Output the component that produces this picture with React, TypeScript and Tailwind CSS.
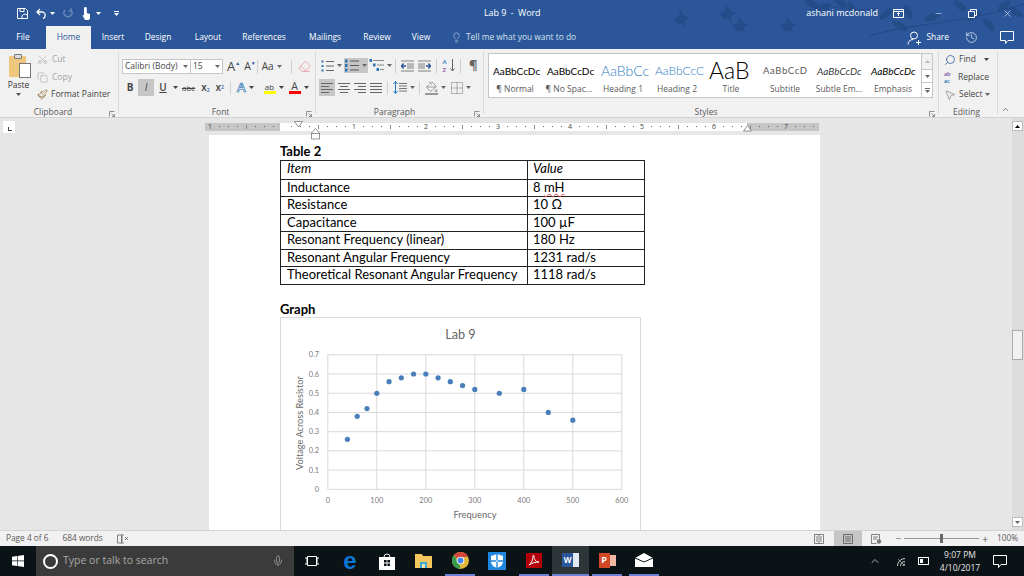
import {
  ChevronUp,
  Copy,
  Eraser,
  History,
  Lightbulb,
  Mic,
  Minus,
  MousePointer2,
  Paintbrush,
  PaintBucket,
  Scissors,
  Search,
  X,
} from 'lucide-react';

const ui = "font-['Open_Sans','Noto_Sans',sans-serif]";

const tabs: [string, string][] = [
  ['File', 'w-[46px]'],
  ['Home', 'w-[45px]'],
  ['Insert', 'w-[44px]'],
  ['Design', 'w-[46px]'],
  ['Layout', 'w-[54px]'],
  ['References', 'w-[58px]'],
  ['Mailings', 'w-[64px]'],
  ['Review', 'w-[40px]'],
  ['View', 'w-[48px]'],
];

const styleItems: { sample: string; label: string; cls: string }[] = [
  { sample: 'AaBbCcDc', label: '¶ Normal', cls: 'text-[10px] text-black' },
  { sample: 'AaBbCcDc', label: '¶ No Spac...', cls: 'text-[10px] text-black' },
  { sample: 'AaBbCc', label: 'Heading 1', cls: 'text-[14px] font-light text-[#2e7cc4]' },
  { sample: 'AaBbCcC', label: 'Heading 2', cls: 'text-[12px] font-light text-[#2e7cc4]' },
  { sample: 'AaB', label: 'Title', cls: 'text-[23px] font-light text-black' },
  { sample: 'AaBbCcD', label: 'Subtitle', cls: 'text-[9.5px] tracking-[0.6px] text-[#5a5a5a]' },
  { sample: 'AaBbCcDc', label: 'Subtle Em...', cls: 'text-[10px] italic text-[#404040]' },
  { sample: 'AaBbCcDc', label: 'Emphasis', cls: 'text-[10px] italic text-black' },
];

const rows = [
  ['Inductance', '8 mH'],
  ['Resistance', '10 Ω'],
  ['Capacitance', '100 µF'],
  ['Resonant Frequency (linear)', '180 Hz'],
  ['Resonant Angular Frequency', '1231 rad/s'],
  ['Theoretical Resonant Angular Frequency', '1118 rad/s'],
];

const points = [
  [40, 0.26], [60, 0.38], [80, 0.42], [100, 0.5], [125, 0.56], [150, 0.58], [175, 0.6], [200, 0.6],
  [225, 0.58], [250, 0.56], [275, 0.54], [300, 0.52], [350, 0.5], [400, 0.52], [450, 0.4], [500, 0.36],
];

const Caret = ({ className = 'text-[#666]' }: { className?: string }) => (
  <svg width="5" height="3" viewBox="0 0 5 3" className={`shrink-0 ${className}`}>
    <path d="M0 0h5L2.5 3z" fill="currentColor" />
  </svg>
);

const GroupLabel = ({ label, shift = '', launcher = true }: { label: string; shift?: string; launcher?: boolean }) => (
  <div className="relative flex h-[10px] items-center justify-center pt-[6px] text-[8.5px] text-[#595959]">
    <span className={shift}>{label}</span>
    {launcher && (
      <svg width="6" height="6" viewBox="0 0 6 6" className="absolute right-[3px] bottom-[-3px]">
        <path d="M0.5 5.5V0.5H5.5M5.5 5.5L2.5 2.5M3 5.5h2.5V3" fill="none" stroke="#777" strokeWidth="0.8" />
      </svg>
    )}
  </div>
);

const Cell = ({ children, w, h = 'h-[17px]', active }: { children: React.ReactNode; w: string; h?: string; active?: boolean }) => (
  <div className={`flex items-center justify-center gap-[3px] ${w} ${h} ${active ? 'bg-[#c6c6c6]' : ''}`}>{children}</div>
);

const Sep = ({ className = 'mx-[2px]' }: { className?: string }) => <div className={`h-[14px] w-px shrink-0 bg-[#cfcfcf] ${className}`} />;

const Lines = ({ d }: { d: string }) => (
  <svg width="12" height="12" viewBox="0 0 12 12">
    <path d={d} fill="none" stroke="#666" />
  </svg>
);

const BulletIcon = () => (
  <svg width="13" height="12" viewBox="0 0 13 12">
    <path d="M5 1.5h8M5 6h8M5 10.5h8" stroke="#666" />
    <path d="M0.5 0.5h2v2h-2zM0.5 5h2v2h-2zM0.5 9.5h2v2h-2z" fill="#2e74b5" />
  </svg>
);

const NumberIcon = () => (
  <svg width="15" height="13" viewBox="0 0 15 13">
    <path d="M6 2h9M6 6.5h9M6 11h9" stroke="#555" />
    <path d="M1 0.5h2.5v3H1zM1 5h2.5v3H1zM1 9.5h2.5v3H1z" fill="#2e74b5" />
  </svg>
);

const MultiIcon = () => (
  <svg width="15" height="13" viewBox="0 0 15 13">
    <path d="M4 1.5h11M8 6h7M11 10.5h4" stroke="#888" />
    <path d="M0.5 0h2.5v3H0.5zM4 4.5h2.5v3H4zM7.5 9h2.5v3H7.5z" fill="#2e74b5" />
  </svg>
);

const IndentIcon = ({ flip }: { flip?: boolean }) => (
  <svg width="13" height="12" viewBox="0 0 13 12" className={flip ? '-scale-x-100' : ''}>
    <path d="M0 1h13M0 11h13M6 4h7M6 6h7M6 8h7" stroke="#666" strokeWidth="0.8" />
    <path d="M5 6H0.5M2.5 3.5L0.5 6l2 2.5" fill="none" stroke="#2b579a" strokeWidth="1.4" />
  </svg>
);

const Ruler = () => {
  const cells = Array.from({ length: 68 }, (_, k) => k - 8);
  return (
    <div className="flex h-[17px] shrink-0 items-center">
      <div className="ml-[3px] flex h-[12px] w-[12px] items-end justify-center bg-white pb-[2px] pl-[1px]">
        <div className="h-[4px] w-[4px] border-b border-l border-[#444]" />
      </div>
      <div className="relative ml-[190px] flex h-[8px] w-[614px] bg-[linear-gradient(90deg,#c6c6c6_75px,#fff_75px,#fff_542px,#c6c6c6_542px)] text-[7px] leading-[8px] text-[#444]">
        <div className="w-[0.5px]" />
        {cells.map((k) => (
          <div key={k} className="flex w-[9px] shrink-0 items-center justify-center">
            {k % 8 === 0 && k !== 0 ? (
              Math.abs(k / 8)
            ) : k % 4 === 0 && k !== 0 ? (
              <div className="h-[4px] w-px bg-[#888]" />
            ) : k !== 0 ? (
              <div className="h-px w-px bg-[#666]" />
            ) : null}
          </div>
        ))}
        <svg width="9" height="8" viewBox="0 0 9 8" className="absolute top-[-2px] left-[89px]">
          <path d="M0.5 0.5h8L4.5 6z" fill="#fff" stroke="#777" strokeWidth="0.8" />
        </svg>
        <svg width="9" height="12" viewBox="0 0 9 12" className="absolute top-[5px] left-[106px]">
          <path d="M4.5 0.5L8.5 5v6h-8V5z" fill="#fff" stroke="#777" strokeWidth="0.8" />
          <path d="M0.5 5.5h8" stroke="#777" strokeWidth="0.8" />
        </svg>
        <svg width="9" height="7" viewBox="0 0 9 7" className="absolute top-[2px] left-[538px]">
          <path d="M4.5 0.5L8.5 6h-8z" fill="#fff" stroke="#777" strokeWidth="0.8" />
        </svg>
      </div>
    </div>
  );
};

const Chart = () => {
  const px = (v: number) => 47.8 + (v / 600) * 294;
  const py = (v: number) => 172.3 - (v / 0.7) * 134.5;
  return (
    <svg width="361" height="230" viewBox="0 0 361 230" className="block font-['Lato',sans-serif]">
      <rect x="0.5" y="0.5" width="360" height="240" fill="#fff" stroke="#d9d9d9" />
      <text x="180.5" y="22" textAnchor="middle" fontSize="12.6" fill="#666">Lab 9</text>
      {[0, 0.1, 0.2, 0.3, 0.4, 0.5, 0.6, 0.7].map((v) => (
        <g key={v}>
          <line x1="47.8" x2="341.8" y1={py(v)} y2={py(v)} stroke="#d9d9d9" />
          <text x="39" y={py(v) + 2.5} textAnchor="end" fontSize="7.4" fill="#7a7a7a">{v}</text>
        </g>
      ))}
      {[0, 100, 200, 300, 400, 500, 600].map((v) => (
        <g key={v}>
          <line y1="37.8" y2="172.3" x1={px(v)} x2={px(v)} stroke="#d9d9d9" />
          <text x={px(v)} y="186" textAnchor="middle" fontSize="7.4" fill="#7a7a7a">{v}</text>
        </g>
      ))}
      <text transform="translate(23 106) rotate(-90)" textAnchor="middle" fontSize="9.2" fill="#6a6a6a">Voltage Across Resistor</text>
      <text x="195" y="201" textAnchor="middle" fontSize="9.4" fill="#6a6a6a">Frequency</text>
      {points.map(([x, y]) => (
        <circle key={x} cx={px(x)} cy={py(y)} r="2.6" fill="#4a7ebb" />
      ))}
    </svg>
  );
};

const birds: [number, number][] = [[10, 10], [56, 5], [69, 17], [117, 17]];
const leaves: [number, number, number][] = [
  [148, 4, 30], [160, 8, -30], [176, 2, 40], [188, 9, 60], [222, 14, -40], [236, 26, 30], [244, 12, 60],
  [268, 17, -20], [296, 6, 40], [310, 16, -30], [325, 25, 50], [340, 6, -40], [352, 12, 30],
];

const TitleArt = () => (
  <svg width="360" height="49" viewBox="0 0 360 49" className="pointer-events-none absolute top-0 right-0 text-[#244c88]">
    <g fill="currentColor">
      {birds.map(([x, y]) => (
        <path key={x} transform={`translate(${x} ${y}) scale(1.2)`} d="M0 7l4-2 1-5 3 4 5 3-4 2 1 6-3-4-4 1z" />
      ))}
      {leaves.map(([x, y, r]) => (
        <ellipse key={x} cx={x} cy={y} rx="8" ry="3.4" transform={`rotate(${r} ${x} ${y})`} />
      ))}
    </g>
    <path d="M205 36C240 24 300 24 360 4M140 0C170 8 190 12 215 8" fill="none" stroke="currentColor" strokeWidth="1.2" />
  </svg>
);

const Bubble = ({ w = 14 }: { w?: number }) => (
  <svg width={w} height="13" viewBox="0 0 14 13">
    <path d="M0.5 0.5h13v9H8l-2.5 3v-3h-5z" fill="none" stroke="#fff" />
  </svg>
);

const WinLogo = () => (
  <svg width="12" height="12" viewBox="0 0 12 12">
    <path d="M0 1.7L5 1v4.6H0zM5.6 0.9L12 0v5.6H5.6zM0 6.2h5v4.7l-5-.7zM5.6 6.2H12V12l-6.4-.9z" fill="#fff" />
  </svg>
);

const Running = ({ children, w, active }: { children: React.ReactNode; w: string; active?: boolean }) => (
  <div className={`flex h-[30px] flex-col items-center ${w}`}>
    <div className={`flex h-[28px] w-full items-center justify-center ${active ? 'bg-[#2e3539]' : ''}`}>{children}</div>
    <div className={`h-[2px] bg-[#6f80d8] ${active ? 'w-full' : 'w-[30px]'}`} />
  </div>
);

const Slot = ({ children, w }: { children: React.ReactNode; w: string }) => (
  <div className={`flex h-[30px] items-center justify-center ${w}`}>{children}</div>
);

export default function App() {
  return (
    <div className={`flex h-[576px] w-[1024px] flex-col overflow-hidden bg-[#e6e6e6] ${ui}`}>
      {/* title bar */}
      <header className="relative h-[49px] shrink-0 bg-[#2b579a] text-white">
        <TitleArt />
        <div className="relative flex h-[26px] items-center">
          <div className="flex w-[130px] items-center pl-[16px]">
            <svg width="13" height="13" viewBox="0 0 13 13" className="mr-[7px]">
              <path d="M1.5 1.5h8l2 2v8h-10z" fill="none" stroke="#fff" />
              <path d="M4 1.5v3h4v-3M6 11a3 3 0 0 1 5-3" fill="none" stroke="#fff" />
            </svg>
            <svg width="12" height="11" viewBox="0 0 12 11" className="mr-[2px]">
              <path d="M4 1L1 4l3 3M1 4h6a3.5 3.5 0 0 1 0 6.5" fill="none" stroke="#fff" strokeWidth="1.3" />
            </svg>
            <Caret className="mr-[8px] text-white" />
            <svg width="10" height="11" viewBox="0 0 10 11" className="mr-[9px]">
              <path d="M2 2a4 4 0 1 0 6 0M8 0v3H5" fill="none" stroke="#6e8ebd" strokeWidth="1.2" />
            </svg>
            <svg width="9" height="13" viewBox="0 0 9 13" className="mr-[5px]">
              <path d="M2 1.5a1.4 1.4 0 0 1 2.8 0V6L8 7v4l-1 2H3L0.5 8.5 2 8z" fill="#fff" />
            </svg>
            <Caret className="mr-[13px] text-white" />
            <div className="flex flex-col items-center gap-[1px]">
              <div className="h-px w-[5px] bg-white" />
              <Caret className="text-white" />
            </div>
          </div>
          <div className="ml-[354px] text-[9px] tracking-[-0.1px] whitespace-pre">Lab 9  -  Word</div>
          <div className="ml-auto flex items-center">
            <span className="mr-[15px] text-[9px]">ashani mcdonald</span>
            <svg width="11" height="9" viewBox="0 0 11 9" className="mr-[30px]">
              <path d="M0.5 0.5h10v8h-10zM0.5 2.5h10M5.5 7V4M4 5l1.5-1.5L7 5" fill="none" stroke="#fff" />
            </svg>
            <Minus size={9} strokeWidth={1.4} className="mr-[25px]" />
            <svg width="9" height="9" viewBox="0 0 9 9" className="mr-[25px]">
              <path d="M0.5 2.5h6v6h-6zM2.5 2.5v-2h6v6h-2" fill="none" stroke="#fff" />
            </svg>
            <X size={11} strokeWidth={1.2} className="mr-[11px]" />
          </div>
        </div>
        <div className="relative flex h-[23px] items-center text-[8.4px]">
          {tabs.map(([t, w]) => (
            <div
              key={t}
              className={`flex h-[23px] items-center justify-center ${w} ${
                t === 'Home' ? 'bg-[#f1f1f1] text-[#2b579a]' : 'text-white'
              }`}
            >
              {t}
            </div>
          ))}
          <div className="ml-[6px] flex items-center gap-[4px] text-[#d5e0ef]">
            <Lightbulb size={11} strokeWidth={1.2} />
            <span>Tell me what you want to do</span>
          </div>
          <div className="ml-auto flex items-center">
            <svg width="14" height="14" viewBox="0 0 14 14" className="mr-[5px]">
              <circle cx="7" cy="4.5" r="3.5" fill="none" stroke="#fff" />
              <path d="M1 13.5c0-3 2.2-5 5-5M9 11.5h5M11.5 9v5" fill="none" stroke="#fff" />
            </svg>
            <span className="mr-[16px]">Share</span>
            <History size={13} strokeWidth={1.2} className="mr-[22px]" />
            <Bubble />
            <div className="w-[10px]" />
          </div>
        </div>
      </header>

      {/* ribbon */}
      <section className="flex h-[69px] shrink-0 border-b border-[#d4d4d4] bg-[#f1f1f1] pt-[3px] pb-[3px] text-[8.5px] text-[#444]">
        {/* clipboard */}
        <div className="flex w-[119px] shrink-0 flex-col border-r border-[#d9d9d9]">
          <div className="flex h-[52px]">
            <div className="flex w-[37px] flex-col items-center pt-[2px]">
              <div className="relative ml-[3px] h-[25px] w-[22px]">
                <div className="absolute top-[2px] left-0 h-[21px] w-[17px] rounded-[1px] bg-[#eec77d]" />
                <div className="absolute top-0 left-[5px] h-[5px] w-[8px] rounded-[1px] border border-[#777] bg-[#ddd]" />
                <div className="absolute top-[9px] left-[10px] h-[15px] w-[12px] border border-[#777] bg-white" />
              </div>
              <span className="leading-[11px] text-[#333]">Paste</span>
              <Caret className="mt-[3px] text-[#555]" />
            </div>
            <div className="-mt-[1px] flex flex-col">
              <div className="flex h-[17.5px] items-center gap-[4px] text-[#a3a3a3]">
                <Scissors size={11} strokeWidth={1.2} className="-rotate-90" /> Cut
              </div>
              <div className="flex h-[17.5px] items-center gap-[4px] text-[#a3a3a3]">
                <Copy size={11} strokeWidth={1.2} /> Copy
              </div>
              <div className="flex h-[17.5px] items-center gap-[3px] whitespace-nowrap">
                <Paintbrush size={11} strokeWidth={1.6} className="text-[#8b6c2d]" /> Format Painter
              </div>
            </div>
          </div>
          <GroupLabel label="Clipboard" shift="mr-[12px]" />
        </div>

        {/* font */}
        <div className="flex w-[197px] shrink-0 flex-col border-r border-[#d9d9d9] pl-[3px]">
          <div className="flex h-[52px] flex-col">
            <div className="mt-[6px] flex h-[17px] items-center">
              <div className="flex h-[15px] w-[69px] items-center justify-between border border-[#c6c6c6] bg-white px-[2px]">
                <span className="whitespace-nowrap">Calibri (Body)</span>
                <Caret />
              </div>
              <div className="flex h-[15px] w-[32px] items-center justify-between border border-l-0 border-[#c6c6c6] bg-white px-[2px]">
                <span>15</span>
                <Caret />
              </div>
              <span className="ml-[4px] text-[13px] leading-none">A</span>
              <span className="mb-[6px] text-[5px] leading-none text-[#2b579a]">▲</span>
              <span className="ml-[4px] text-[10.5px] leading-none">A</span>
              <span className="mb-[6px] text-[5px] leading-none text-[#2b579a]">▼</span>
              <Sep className="ml-[1px] mr-[4px]" />
              <span className="text-[10px]">Aa</span>
              <Caret className="ml-[3px] text-[#666]" />
              <Sep className="ml-[9px] mr-[6px]" />
              <Eraser size={13} strokeWidth={1.3} className="text-[#e58a96]" />
            </div>
            <div className="mt-[4px] flex h-[17px] items-center text-[10px] text-[#444]">
              <div className="flex h-[17px] w-[16px] items-center justify-center font-bold">B</div>
              <div className="flex h-[17px] w-[16px] items-center justify-center bg-[#c6c6c6] italic">I</div>
              <div className="ml-[1px] flex h-[17px] w-[16px] items-center justify-center font-semibold underline">U</div>
              <Caret className="ml-[2px]" />
              <div className="ml-[4px] text-[8px] line-through">abc</div>
              <div className="ml-[6px] font-semibold">x<sub className="text-[5px] text-[#2b579a]">2</sub></div>
              <div className="ml-[6px] font-semibold">x<sup className="text-[5px] text-[#2b579a]">2</sup></div>
              <Sep className="mx-[6px]" />
              <span className="text-[13px] leading-none font-semibold text-white [-webkit-text-stroke:0.7px_#2e74b5]">A</span>
              <Caret className="mr-[10px] ml-[3px]" />
              <div className="flex flex-col items-center">
                <span className="text-[8px] leading-[9px]">ab</span>
                <div className="h-[3px] w-[12px] bg-[#ffff00]" />
              </div>
              <Caret className="mr-[5px] ml-[3px]" />
              <div className="flex flex-col items-center">
                <span className="text-[10.5px] leading-[10px]">A</span>
                <div className="h-[3px] w-[12px] bg-[#ff0000]" />
              </div>
              <Caret className="ml-[3px]" />
            </div>
          </div>
          <GroupLabel label="Font" shift="ml-[4px]" />
        </div>

        {/* paragraph */}
        <div className="flex w-[168px] shrink-0 flex-col border-r border-[#d9d9d9] pl-[3px]">
          <div className="flex h-[52px] flex-col">
            <div className="mt-[5px] flex h-[17px] items-center">
              <Cell w="w-[25px]">
                <BulletIcon />
                <Caret />
              </Cell>
              <Cell w="w-[25px]" h="h-[15px]" active>
                <NumberIcon />
                <Caret />
              </Cell>
              <Cell w="w-[26px]">
                <MultiIcon />
                <Caret />
              </Cell>
              <Sep />
              <Cell w="w-[18px]">
                <IndentIcon />
              </Cell>
              <Cell w="w-[18px]">
                <IndentIcon flip />
              </Cell>
              <Sep />
              <Cell w="w-[20px]">
                <div className="flex flex-col font-['Lato',sans-serif] text-[6px] leading-[7.5px] font-bold">
                  <span className="text-[#2b79c2]">A</span>
                  <span className="text-[#8a5fb0]">Z</span>
                </div>
                <svg width="5" height="13" viewBox="0 0 5 13">
                  <path d="M2.5 0v12M0.5 9.5l2 2.5 2-2.5" fill="none" stroke="#666" />
                </svg>
              </Cell>
              <Sep />
              <Cell w="w-[20px]">
                <span className="text-[13px] leading-none font-bold text-[#666]">¶</span>
              </Cell>
            </div>
            <div className="mt-[5px] flex h-[17px] items-center">
              <Cell w="w-[16px]" active>
                <Lines d="M0 1.5h12M0 4.5h8M0 7.5h12M0 10.5h8" />
              </Cell>
              <Cell w="w-[17px]">
                <Lines d="M0 1.5h12M2 4.5h8M0 7.5h12M2 10.5h8" />
              </Cell>
              <Cell w="w-[16px]">
                <Lines d="M0 1.5h12M4 4.5h8M0 7.5h12M4 10.5h8" />
              </Cell>
              <Cell w="w-[16px]">
                <Lines d="M0 1.5h12M0 4.5h12M0 7.5h12M0 10.5h12" />
              </Cell>
              <Sep className="mx-[3px]" />
              <Cell w="w-[25px]">
                <svg width="14" height="13" viewBox="0 0 14 13">
                  <path d="M2.5 0.5v12M0.5 3l2-2.5 2 2.5M0.5 10l2 2.5 2-2.5" fill="none" stroke="#2b79c2" />
                  <path d="M6 2.5h8M6 5h8M6 7.5h8M6 10h8" stroke="#666" strokeWidth="0.9" />
                </svg>
                <Caret />
              </Cell>
              <Sep className="mx-[3px]" />
              <Cell w="w-[25px]">
                <div className="flex flex-col items-center">
                  <PaintBucket size={12} strokeWidth={1.2} className="text-[#666]" />
                  <div className="h-[2px] w-[13px] border border-[#999] bg-white" />
                </div>
                <Caret />
              </Cell>
              <Cell w="w-[25px]">
                <svg width="12" height="12" viewBox="0 0 12 12">
                  <path d="M0.5 0.5h11v11h-11zM6 0.5v11M0.5 6h11" fill="none" stroke="#777" strokeDasharray="1 1" />
                </svg>
                <Caret />
              </Cell>
            </div>
          </div>
          <GroupLabel label="Paragraph" shift="mr-[13px]" />
        </div>

        {/* styles */}
        <div className="flex w-[455px] shrink-0 flex-col border-r border-[#d9d9d9] pl-[4px]">
          <div className="h-[52px] pt-[1px]">
            <div className="flex h-[45px] w-[445px] border border-[#c6c6c6] bg-white">
              <div className="-ml-[1px] flex flex-1">
                {styleItems.map((s) => (
                  <div key={s.label} className="flex w-[54px] flex-col items-center">
                    <div className="flex h-[27px] w-[44px] items-center pt-[6px] font-['Lato',sans-serif] whitespace-nowrap">
                      <span className={`leading-none ${s.cls}`}>{s.sample}</span>
                    </div>
                    <span className="mt-[2px] leading-[11px] whitespace-nowrap text-[#5a5a5a]">{s.label}</span>
                  </div>
                ))}
              </div>
              <div className="flex w-[11px] flex-col border-l border-[#c6c6c6]">
                <div className="flex h-[15px] items-center justify-center bg-[#f1f1f1]">
                  <Caret className="rotate-180 text-[#bbb]" />
                </div>
                <div className="flex h-[14px] items-center justify-center border-y border-[#c6c6c6]">
                  <Caret />
                </div>
                <div className="flex flex-1 flex-col items-center justify-center gap-[1px]">
                  <div className="h-px w-[5px] bg-[#666]" />
                  <Caret />
                </div>
              </div>
            </div>
          </div>
          <GroupLabel label="Styles" shift="mr-[14px]" />
        </div>

        {/* editing */}
        <div className="flex w-[59px] shrink-0 flex-col border-r border-[#d9d9d9] pl-[5px]">
          <div className="-mt-[1px] flex h-[53px] flex-col">
            <div className="flex h-[17.5px] items-center gap-[3px]">
              <Search size={12} strokeWidth={1.5} className="-scale-x-100 text-[#2b579a]" /> Find
              <Caret className="ml-[5px]" />
            </div>
            <div className="flex h-[17.5px] items-center gap-[2px]">
              <div className="flex w-[12px] flex-col font-['Lato',sans-serif] text-[6px] leading-[7.5px] font-bold">
                <span className="text-[#7b5ea7]">ab</span>
                <span className="text-[#2b79c2]">ac</span>
              </div>
              Replace
            </div>
            <div className="flex h-[17.5px] items-center gap-[3px]">
              <MousePointer2 size={12} strokeWidth={1} className="text-[#555]" /> Select
              <Caret />
            </div>
          </div>
          <GroupLabel label="Editing" shift="mr-[8px]" launcher={false} />
        </div>
        <div className="flex w-[15px] shrink-0 items-end justify-center">
          <ChevronUp size={9} strokeWidth={2} className="text-[#555]" />
        </div>
      </section>

      <div className="flex min-h-0 flex-1">
        <div className="flex min-w-0 flex-1 flex-col">
          <Ruler />
          {/* document */}
          <main className="min-h-0 flex-1 overflow-hidden pl-[209px]">
            <article className="h-[420px] w-[611px] bg-white pt-[8px] pl-[71px] font-['Lato',sans-serif] text-[13px] text-black">
              <h2 className="h-[17px] leading-[17px] font-bold">Table 2</h2>
              <div className="w-[365px] border border-[#222] leading-[15.5px]">
                <div className="flex h-[17.5px]">
                  <div className="w-[247px] border-r border-[#222] pl-[6px] italic">Item</div>
                  <div className="pl-[5px] italic">Value</div>
                </div>
                {rows.map(([a, b]) => (
                  <div key={a} className="flex h-[17.5px] border-t border-[#222]">
                    <div className="w-[247px] border-r border-[#222] pl-[6px] whitespace-nowrap">{a}</div>
                    <div className="pl-[5px]">
                      {b === '8 mH' ? (
                        <>
                          8 <span className="underline decoration-[#e04040] decoration-wavy decoration-1">mH</span>
                        </>
                      ) : (
                        b
                      )}
                    </div>
                  </div>
                ))}
              </div>
              <h2 className="mt-[16px] h-[16px] leading-[17px] font-bold">Graph</h2>
              <Chart />
            </article>
          </main>
        </div>
        <aside className="flex w-[12px] shrink-0 flex-col items-center bg-[#dcdcdc] pr-px">
          <div className="mt-[3px] flex h-[10px] w-full items-center justify-center border border-[#bbb] bg-white">
            <Caret className="rotate-180" />
          </div>
          <div className="mt-[199px] h-[30px] w-full border border-[#ababab] bg-[#f1f1f1]" />
          <div className="mt-auto mb-[3px] flex h-[10px] w-full items-center justify-center border border-[#bbb] bg-white">
            <Caret />
          </div>
        </aside>
      </div>

      {/* status bar */}
      <footer className="flex h-[16px] shrink-0 items-center border-t border-[#d4d4d4] bg-[#f1f1f1] text-[8.3px] text-[#595959]">
        <span className="ml-[6px]">Page 4 of 6</span>
        <span className="ml-[14px]">684 words</span>
        <svg width="11" height="10" viewBox="0 0 11 10" className="ml-[14px]">
          <path d="M0.5 1h4v8h-4zM6 1h1M6 9h1M5 0v10M8 3l3 3M11 3L8 6" fill="none" stroke="#666" strokeWidth="0.8" />
        </svg>
        <div className="ml-auto flex h-full items-center">
          <svg width="10" height="10" viewBox="0 0 10 10" className="mr-[10px]">
            <path d="M0.5 0.5h9v9h-9zM5 0.5v9M2 3h2M2 5h2M2 7h2M6 3h2M6 5h2M6 7h2" fill="none" stroke="#666" strokeWidth="0.8" />
          </svg>
          <div className="flex h-full w-[28px] items-center justify-center bg-[#c6c6c6]">
            <svg width="10" height="10" viewBox="0 0 10 10">
              <path d="M0.5 0.5h9v9h-9zM2 3h6M2 5h6M2 7h6" fill="none" stroke="#555" strokeWidth="0.8" />
            </svg>
          </div>
          <svg width="11" height="10" viewBox="0 0 11 10" className="mr-[13px] ml-[9px]">
            <path d="M0.5 0.5h8v6M0.5 0.5v9h5M2 3h5M2 5h4" fill="none" stroke="#666" strokeWidth="0.8" />
            <circle cx="8" cy="7.5" r="2.2" fill="#777" />
          </svg>
          <Minus size={7} strokeWidth={2} className="mr-[2px] text-[#555]" />
          <div className="relative flex h-[9px] w-[75px] items-center">
            <div className="h-px w-full bg-[#999]" />
            <div className="absolute left-[36px] h-[9px] w-[3px] bg-[#666]" />
          </div>
          <span className="ml-[3px] text-[10px] leading-none text-[#555]">+</span>
          <span className="mr-[6px] ml-[9px]">100%</span>
        </div>
      </footer>

      {/* taskbar */}
      <nav className="flex h-[30px] shrink-0 items-center bg-[#0c1317] text-white">
        <div className="flex h-full w-[36px] items-center justify-center">
          <WinLogo />
        </div>
        <div className="flex h-full w-[258px] items-center bg-[#3b3b3b] pr-[10px] pl-[7px]">
          <div className="h-[15px] w-[15px] rounded-full border-2 border-white" />
          <span className="ml-[5px] text-[10.5px] text-[#a9a9a9]">Type or talk to search</span>
          <Mic size={12} strokeWidth={1.2} className="ml-auto text-[#bbb]" />
        </div>
        <Slot w="w-[36px]">
          <svg width="16" height="10" viewBox="0 0 16 10">
            <path d="M3.5 0.5h9v9h-9zM1 2h2v6H1M15 2h-2v6h2" fill="none" stroke="#fff" />
          </svg>
        </Slot>
        <Slot w="w-[40px]">
          <span className="font-['Liberation_Sans',sans-serif] text-[24px] leading-none font-bold text-[#0c78d6]">e</span>
        </Slot>
        <Slot w="w-[34px]">
          <svg width="16" height="17" viewBox="0 0 16 17">
            <path d="M0 4h16v13H0z" fill="#fff" />
            <path d="M5 4a3 3 0 0 1 6 0" fill="none" stroke="#fff" />
            <path d="M5 7h2.6v2.6H5zM8.4 7H11v2.6H8.4zM5 10.4h2.6V13H5zM8.4 10.4H11V13H8.4z" fill="#0c1317" />
          </svg>
        </Slot>
        <Slot w="w-[38px]">
          <svg width="17" height="14" viewBox="0 0 17 14">
            <path d="M0 0h7l1 2h9v12H0z" fill="#f3c75e" />
            <path d="M5 8h7v6H5z" fill="#3ca8d8" />
            <path d="M7 10h3v4H7z" fill="#f3e4a8" />
          </svg>
        </Slot>
        <Running w="w-[36px]">
          <svg width="17" height="17" viewBox="0 0 17 17">
            <circle cx="8.5" cy="8.5" r="8.5" fill="#e2b93b" />
            <path d="M8.5 0A8.5 8.5 0 0 1 16 5H8.5a3.5 3.5 0 0 0-3.2 2L2 3a8.5 8.5 0 0 1 6.5-3z" fill="#d6453a" />
            <path d="M2 3l3.4 6 3 5.8-1 2.1A8.5 8.5 0 0 1 2 3z" fill="#3a9a4e" />
            <circle cx="8.5" cy="8.5" r="3.8" fill="#fff" />
            <circle cx="8.5" cy="8.5" r="2.9" fill="#4285f4" />
          </svg>
        </Running>
        <Slot w="w-[38px]">
          <svg width="18" height="18" viewBox="0 0 18 18">
            <path d="M0 0h18v18H0z" fill="#1f87e0" />
            <path d="M9 2l6 2v5c0 4-3 6-6 7-3-1-6-3-6-7V4z" fill="#fff" />
            <path d="M8.3 2v14h1.4V2zM3 8.3h12v1.4H3z" fill="#1f87e0" />
          </svg>
        </Slot>
        <Running w="w-[36px]">
          <div className="flex h-[15px] w-[16px] items-center justify-center rounded-[1px] bg-[#b4000a]">
            <svg width="12" height="12" viewBox="0 0 12 12">
              <path d="M1 11c3-2 4-6 4-9 0-1 1-1 1 0 0 4 2 6 5 6-3 0-7 1-10 3z" fill="none" stroke="#fff" />
            </svg>
          </div>
        </Running>
        <Running w="w-[37px]" active>
          <div className="flex h-[14px] w-[17px]">
            <div className="flex h-[14px] w-[11px] items-center justify-center bg-[#2b579a] text-[8px] font-bold">W</div>
            <div className="h-[14px] w-[6px] bg-[#dfe8f5]" />
          </div>
        </Running>
        <Running w="w-[36px]">
          <div className="flex h-[15px] w-[17px]">
            <div className="flex h-[15px] w-[11px] items-center justify-center bg-[#d24726] text-[9px] font-bold">P</div>
            <div className="h-[11px] w-[6px] self-center bg-[#f0b8a5]" />
          </div>
        </Running>
        <Running w="w-[37px]">
          <svg width="18" height="14" viewBox="0 0 18 14">
            <path d="M0 5L9 0l9 5v9H0z" fill="#fff" />
            <path d="M0 5l9 4 9-4" fill="none" stroke="#0c1317" />
          </svg>
        </Running>
        <div className="ml-auto flex h-full items-center">
          <ChevronUp size={12} strokeWidth={1.3} className="mr-[13px]" />
          <svg width="12" height="12" viewBox="0 0 12 12" className="mr-[12px]">
            <path d="M11 3.5A7.5 7.5 0 0 0 3.5 11M11 6.5A4.5 4.5 0 0 0 6.5 11M11 9a2 2 0 0 0-2 2" fill="none" stroke="#ccc" />
            <path d="M4 4l7 7" stroke="#ccc" strokeWidth="0.6" />
          </svg>
          <div className="mr-[9px] flex h-[8px] w-[11px] items-center border border-white p-px">
            <div className="h-full w-[3px] bg-white" />
          </div>
          <div className="mr-[11px] flex w-[44px] flex-col items-center text-[8.5px] leading-[13px] text-[#e6e6e6]">
            <span>9:07 PM</span>
            <span>4/10/2017</span>
          </div>
          <Bubble />
          <div className="w-[17px]" />
        </div>
      </nav>
    </div>
  );
}
